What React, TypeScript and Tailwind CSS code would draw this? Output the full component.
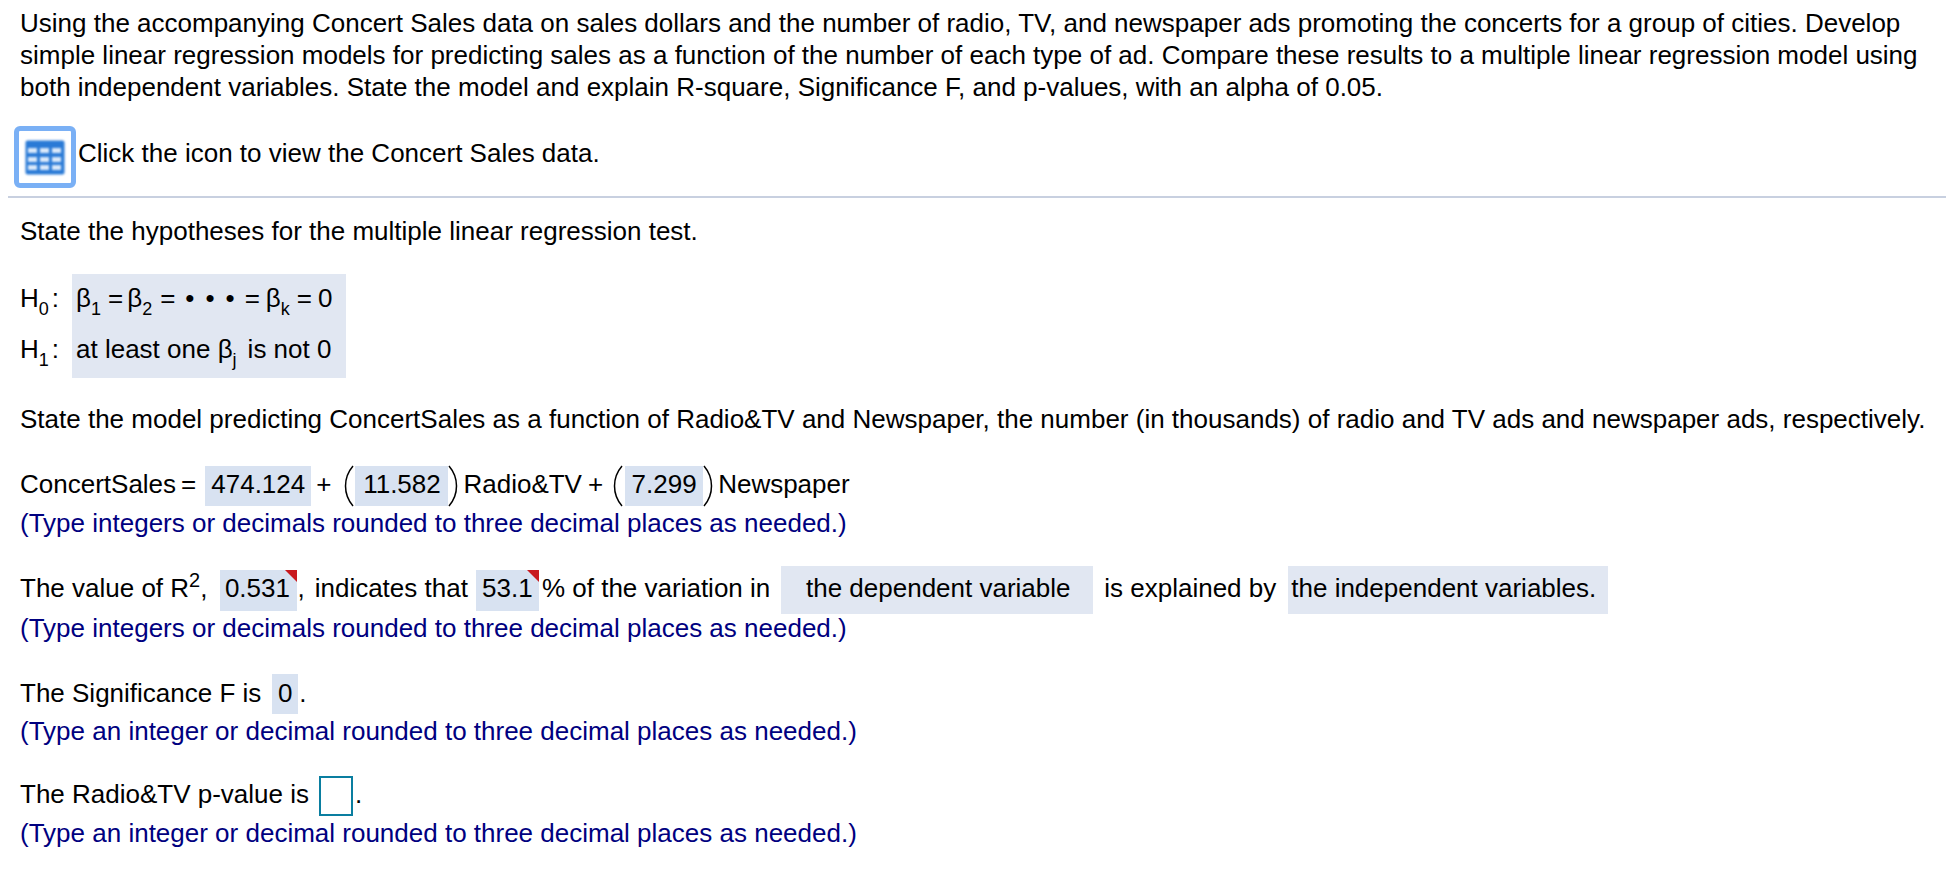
import React from "react";

const Hint = ({ children, className = "" }: { children: React.ReactNode; className?: string }) => (
  <div className={`pl-5 text-[#000080] h-8 leading-8 whitespace-nowrap ${className}`}>{children}</div>
);

const Sub = ({ children }: { children: React.ReactNode }) => (
  <span className="text-[18px] relative top-[8px] leading-none">{children}</span>
);

const Paren = ({ flip = false }: { flip?: boolean }) => (
  <svg width="10" height="42" viewBox="0 0 10 42" className={`shrink-0 ${flip ? "-scale-x-100" : ""}`}>
    <path d="M9 1 C3 8 1.5 14 1.5 21 C1.5 28 3 34 9 41" fill="none" stroke="#000" strokeWidth="1.5" />
  </svg>
);

const Corner = () => (
  <span className="absolute top-0 right-0 w-0 h-0 border-t-[12px] border-l-[12px] border-t-[#c8191e] border-l-transparent" />
);

const Grid = () => (
  <svg width="40" height="35" viewBox="0 0 40 35" className="blur-[0.8px]">
    <rect x="0.5" y="0.5" width="39" height="34" rx="2" fill="#2a7ad6" />
    {[8, 17, 25].map((y) =>
      [3, 15, 27].map((x) => <rect key={`${x}-${y}`} x={x} y={y} width="9" height="5" fill="#dbe9fa" />)
    )}
  </svg>
);

export default function App() {
  return (
    <div className="min-h-[872px] bg-white text-black text-[26px] font-['Liberation_Sans',Arial,sans-serif] overflow-hidden">
      <div className="pt-[7px] pl-5 leading-8 whitespace-nowrap">
        <div>Using the accompanying Concert Sales data on sales dollars and the number of radio, TV, and newspaper ads promoting the concerts for a group of cities. Develop</div>
        <div>simple linear regression models for predicting sales as a function of the number of each type of ad. Compare these results to a multiple linear regression model using</div>
        <div>both independent variables. State the model and explain R-square, Significance F, and p-values, with an alpha of 0.05.</div>
      </div>

      <div className="flex items-start pl-[14px] mt-[23px]">
        <div className="w-[62px] h-[62px] border-[5px] border-[#7ab0f5] rounded-[6px] flex items-center justify-center bg-white">
          <Grid />
        </div>
        <div className="ml-[2px] leading-8 mt-[11px]">Click the icon to view the Concert Sales data.</div>
      </div>

      <div className="ml-2 mt-2 h-[2px] bg-[#c8d0e0]" />

      <div className="pl-5 mt-[17px] leading-8">State the hypotheses for the multiple linear regression test.</div>

      <div className="flex pl-5 mt-[27px]">
        <div className="w-[52px] flex flex-col">
          <div className="h-[50px] leading-[48px]">H<Sub>0</Sub><span className="ml-[3px]">:</span></div>
          <div className="h-[54px] leading-[50px]">H<Sub>1</Sub><span className="ml-[3px]">:</span></div>
        </div>
        <div className="w-[274px] h-[104px] bg-[#e1e7f2] pl-[4px] whitespace-nowrap">
          <div className="h-[50px] leading-[48px] flex">
            <span>β<Sub>1</Sub></span>
            <span className="ml-[7px]">=</span>
            <span className="ml-[4px]">β<Sub>2</Sub></span>
            <span className="ml-[8px]">=</span>
            <span className="ml-[10px] tracking-[11px]">•••</span>
            <span className="-ml-[1px]">=</span>
            <span className="ml-[6px]">β<Sub>k</Sub></span>
            <span className="ml-[7px]">=</span>
            <span className="ml-[6px]">0</span>
          </div>
          <div className="h-[54px] leading-[50px]">at least one β<Sub>j</Sub><span className="ml-[11px]">is not 0</span></div>
        </div>
      </div>

      <div className="pl-5 mt-[25px] leading-8 whitespace-nowrap">State the model predicting ConcertSales as a function of Radio&amp;TV and Newspaper, the number (in thousands) of radio and TV ads and newspaper ads, respectively.</div>

      <div className="flex items-center pl-5 mt-[31px] h-10 whitespace-nowrap">
        <span className="pb-[3px]">ConcertSales</span>
        <span className="ml-[5px] pb-[3px]">=</span>
        <span className="ml-[9px] w-[106px] h-10 pb-[3px] bg-[#d8e2f1] flex items-center justify-center">474.124</span>
        <span className="ml-[5px] pb-[3px]">+</span>
        <span className="ml-[13px]"><Paren /></span>
        <span className="ml-px w-[93px] h-10 pb-[3px] bg-[#d8e2f1] flex items-center justify-center">11.582</span>
        <Paren flip />
        <span className="ml-[5px] pb-[3px]">Radio&amp;TV</span>
        <span className="ml-[6px] pb-[3px]">+</span>
        <span className="ml-[10px]"><Paren /></span>
        <span className="ml-[2px] w-[78px] h-10 pb-[3px] bg-[#d8e2f1] flex items-center justify-center">7.299</span>
        <Paren flip />
        <span className="ml-[5px] pb-[3px]">Newspaper</span>
      </div>
      <Hint className="mt-px">(Type integers or decimals rounded to three decimal places as needed.)</Hint>

      <div className="flex items-center pl-5 mt-[27px] h-12 whitespace-nowrap">
        <span className="pb-[3px]">The value of R<sup className="text-[20px] relative -top-[10px] leading-none">2</sup>,</span>
        <span className="relative ml-[13px] w-[77px] h-[41px] pb-[3px] bg-[#d8e2f1] flex items-center justify-center"><span className="pr-[3px]">0.531</span><Corner /></span>
        <span className="pb-[3px]">,</span>
        <span className="ml-[10px] pb-[3px]">indicates that</span>
        <span className="relative ml-[8px] w-[63px] h-[41px] pb-[3px] bg-[#d8e2f1] flex items-center justify-center">53.1<Corner /></span>
        <span className="ml-[3px] pb-[3px]">% of the variation in</span>
        <span className="ml-[11px] w-[312px] h-12 pb-[3px] pl-[2px] bg-[#e1e7f2] flex items-center justify-center">the dependent variable</span>
        <span className="ml-[11px] pb-[3px]">is explained by</span>
        <span className="ml-[12px] w-[320px] h-12 pb-[3px] pl-[3px] bg-[#e1e7f2] flex items-center">the independent variables.</span>
      </div>
      <Hint className="-mt-[2px]">(Type integers or decimals rounded to three decimal places as needed.)</Hint>

      <div className="flex items-center pl-5 mt-[30px] h-10 whitespace-nowrap">
        <span className="pb-[2px]">The Significance F is</span>
        <span className="ml-[11px] w-[26px] h-10 pb-[2px] bg-[#d8e2f1] flex items-center justify-center">0</span>
        <span className="ml-px pb-[2px]">.</span>
      </div>
      <Hint className="mt-px">(Type an integer or decimal rounded to three decimal places as needed.)</Hint>

      <div className="flex items-center pl-5 mt-[29px] h-10 whitespace-nowrap">
        <span className="pb-1">The Radio&amp;TV p-value is</span>
        <span className="ml-[10px] w-[34px] h-10 border-2 border-[#0a7ea0]" />
        <span className="ml-[2px] pb-1">.</span>
      </div>
      <Hint className="mt-px">(Type an integer or decimal rounded to three decimal places as needed.)</Hint>
    </div>
  );
}
